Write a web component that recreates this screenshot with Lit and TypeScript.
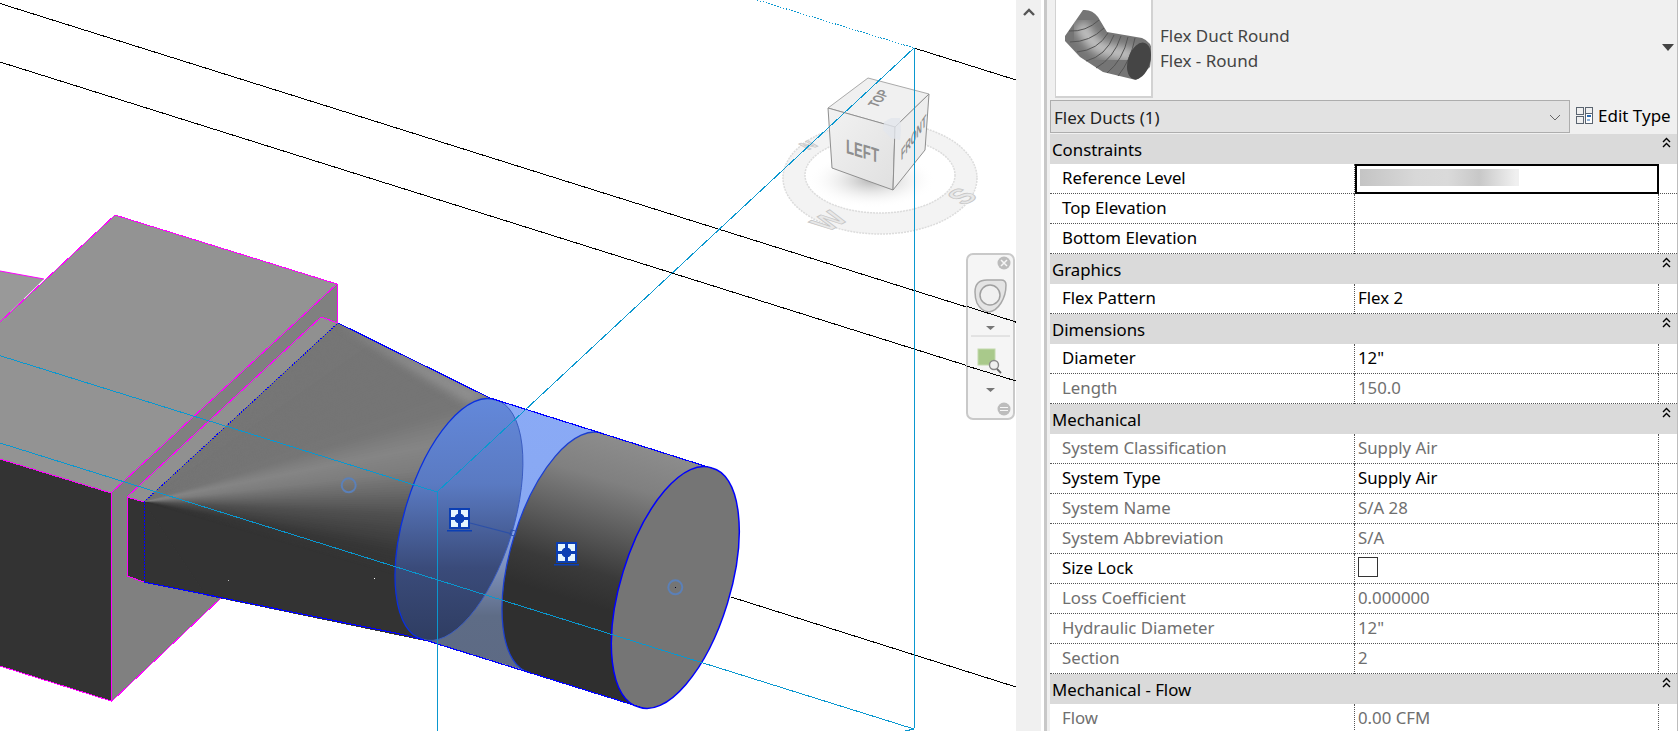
import { LitElement, html, css, svg } from 'lit'
import { customElement } from 'lit/decorators.js'

type Row =
  | { head: string }
  | { label: string; value?: string; off?: boolean; kind?: 'blur' | 'check' }

const ROWS: Row[] = [
  { head: 'Constraints' },
  { label: 'Reference Level', kind: 'blur' },
  { label: 'Top Elevation' },
  { label: 'Bottom Elevation' },
  { head: 'Graphics' },
  { label: 'Flex Pattern', value: 'Flex 2' },
  { head: 'Dimensions' },
  { label: 'Diameter', value: '12"' },
  { label: 'Length', value: '150.0', off: true },
  { head: 'Mechanical' },
  { label: 'System Classification', value: 'Supply Air', off: true },
  { label: 'System Type', value: 'Supply Air' },
  { label: 'System Name', value: 'S/A 28', off: true },
  { label: 'System Abbreviation', value: 'S/A', off: true },
  { label: 'Size Lock', kind: 'check' },
  { label: 'Loss Coefficient', value: '0.000000', off: true },
  { label: 'Hydraulic Diameter', value: '12"', off: true },
  { label: 'Section', value: '2', off: true },
  { head: 'Mechanical - Flow' },
  { label: 'Flow', value: '0.00 CFM', off: true },
]

// reducer shading, colour by slope of the ray out of the rectangle corner
const FAN: [number, number][] = [
  [-1, 0x76], [-0.4, 0x75], [-0.3, 0x76], [-0.2, 0x85], [-0.12, 0x7e],
  [-0.05, 0x6c], [0.05, 0x50], [0.2, 0x36], [0.3, 0x33],
]

function fanGrey(s: number) {
  for (let i = 1; i < FAN.length; i++) {
    if (s <= FAN[i][0]) {
      const [a, ca] = FAN[i - 1]
      const [b, cb] = FAN[i]
      const g = Math.round(ca + ((s - a) / (b - a)) * (cb - ca))
      return `rgb(${g},${g},${g})`
    }
  }
  return '#333'
}

// each wedge runs past the clip, so later ones paint over the seams
function fan() {
  const out = []
  const x = 540 - 144
  for (let s = -1; s < 0.3; s += 0.01) {
    out.push(svg`<polygon points="144,502 540,${502 + s * x} 540,${502 + 1.5 * x}" fill=${fanGrey(s + 0.005)}/>`)
  }
  return out
}

// tilted ellipses as arcs, so a userSpace gradient is not turned with them
const AX = 36.5
const AY = 119.5
const arcFull = (cx: number, cy: number) =>
  `M${cx + AX} ${cy - AY}A125 53 -73 1 0 ${cx - AX} ${cy + AY}A125 53 -73 1 0 ${cx + AX} ${cy - AY}z`
const arcLeft = (cx: number, cy: number) =>
  `M${cx + AX} ${cy - AY}A125 53 -73 1 0 ${cx - AX} ${cy + AY}`
const arcRight = (cx: number, cy: number) =>
  `M${cx - AX} ${cy + AY}A125 53 -73 1 0 ${cx + AX} ${cy - AY}`

const grip = (x: number, y: number) => svg`
  <g transform="translate(${x} ${y})">
    <rect width="21" height="21" fill="#0b3fb4"/>
    <rect x="2" y="2" width="17" height="17" fill="#e6f6ff"/>
    <path d="M9 2h3v4h1l2 2v1h4v3h-4v1l-2 2h-1v4H9v-4H8l-2-2v-1H2V9h4V8l2-2h1z" fill="#0b3fb4"/>
    <rect x="-2" y="22" width="25" height="1.5" fill="#0b3fb4"/>
  </g>`

@customElement('app-root')
export class AppRoot extends LitElement {
  static styles = css`
    :host {
      display: flex;
      width: 1678px;
      height: 731px;
      overflow: hidden;
      background: #fff;
      font-family: 'Noto Sans', 'Open Sans', sans-serif;
      font-size: 16.8px;
      color: #000;
    }
    .canvas {
      flex: 0 0 1016px;
      height: 731px;
    }
    svg {
      display: block;
    }
    .strip {
      flex: 0 0 25px;
      background: #f0f0f0;
      display: flex;
      justify-content: center;
      align-items: flex-start;
      padding-top: 8px;
      box-sizing: border-box;
    }
    .gap {
      flex: 0 0 3px;
      background: #fff;
    }
    .bar {
      flex: 0 0 3px;
      background: #c8c8c8;
    }
    .pad {
      flex: 0 0 3px;
      background: #f0f0f0;
    }
    .panel {
      flex: 0 0 628px;
      height: 731px;
      display: flex;
      flex-direction: column;
      border-right: 1px solid #bdbdbd;
      box-sizing: border-box;
      overflow: hidden;
    }
    .type {
      flex: 0 0 100px;
      min-height: 0;
      background: #f0f0f0;
      display: flex;
      align-items: stretch;
      padding: 0 0 2px 5px;
      box-sizing: border-box;
    }
    .thumb {
      flex: 0 0 98px;
      background: #fff;
      border: solid #d2d2d2;
      border-width: 0 2px 2px 1px;
      box-sizing: border-box;
    }
    .names {
      flex: 1;
      padding: 24px 0 0 7px;
      line-height: 24.5px;
      font-size: 17px;
      color: #444;
    }
    .caret {
      width: 12px;
      margin: 44px 3px 0 0;
    }
    .picker {
      flex: 0 0 34px;
      min-height: 0;
      display: flex;
      background: #f0f0f0;
    }
    .select {
      flex: 0 0 520px;
      box-sizing: border-box;
      height: 33px;
      background: #e2e2e2;
      border: 1px solid #adadad;
      border-width: 1px 1.5px 1.5px 1px;
      display: flex;
      align-items: center;
      justify-content: space-between;
      padding: 1px 8px 0 3px;
      color: #222;
      font-size: 17px;
    }
    .edit {
      flex: 1;
      display: flex;
      align-items: center;
      gap: 5px;
      padding: 0 0 4px 6px;
      font-size: 17px;
    }
    .row {
      display: grid;
      grid-template-columns: 304px 304px 1fr;
      flex: 0 0 30px;
      min-height: 0;
      background: #fff;
      line-height: 27px;
    }
    .row > div {
      box-sizing: border-box;
      border-bottom: 1px dotted #555;
      height: 30px;
      white-space: nowrap;
    }
    .lab {
      padding-left: 12px;
    }
    .val {
      border-left: 1px dotted #555;
      padding-left: 3px;
      position: relative;
    }
    .tail {
      border-left: 1px dotted #555;
    }
    .off {
      color: #6f6f6f;
    }
    .focus {
      position: absolute;
      left: 0;
      top: 0;
      width: 304px;
      height: 30px;
      box-sizing: border-box;
      border: 2px solid #000;
      background: #fff;
    }
    .smear {
      position: absolute;
      left: 3px;
      top: 3px;
      width: 159px;
      height: 17px;
      background: linear-gradient(90deg, #c4c4c4, #d8d8d8 35%, #dadada 55%, #c8c8c8 75%, #f0f0f0 98%);
    }
    .check {
      position: absolute;
      left: 3px;
      top: 3px;
      width: 20px;
      height: 20px;
      box-sizing: border-box;
      border: 1.5px solid #333;
    }
    .head {
      flex: 0 0 30px;
      min-height: 0;
      box-sizing: border-box;
      background: #dadada;
      display: flex;
      justify-content: space-between;
      padding: 0 6px 0 2px;
      line-height: 32px;
    }
    .head svg {
      margin-top: 3px;
    }
  `

  private row(r: Row) {
    if ('head' in r) {
      return html`<div class="head"><span>${r.head}</span>
        <svg width="9" height="12" viewBox="0 0 9 12"><path d="M1 5l3.5-3.5L8 5M1 10l3.5-3.5L8 10" fill="none" stroke="#000" stroke-width="1.4"/></svg>
      </div>`
    }
    return html`<div class="row">
      <div class="lab ${r.off ? 'off' : ''}">${r.label}</div>
      <div class="val ${r.off ? 'off' : ''}">
        ${r.value ?? ''}
        ${r.kind === 'blur' ? html`<div class="focus"><div class="smear"></div></div>` : ''}
        ${r.kind === 'check' ? html`<div class="check"></div>` : ''}
      </div>
      <div class="tail"></div>
    </div>`
  }

  private scene() {
    return html`<svg width="1016" height="731" viewBox="0 0 1016 731">
      <defs>
        <linearGradient id="cyl" gradientUnits="userSpaceOnUse" x1="620" y1="440" x2="572" y2="600">
          <stop offset="0" stop-color="#8c8c8c"/><stop offset=".25" stop-color="#808080"/>
          <stop offset=".55" stop-color="#5a5a5a"/><stop offset=".8" stop-color="#3a3a3a"/>
          <stop offset="1" stop-color="#2f2f2f"/>
        </linearGradient>
        <linearGradient id="band" gradientUnits="userSpaceOnUse" x1="0" y1="400" x2="0" y2="670">
          <stop offset="0" stop-color="#8aaaf6"/><stop offset=".45" stop-color="#88a8f2"/>
          <stop offset=".62" stop-color="#7d90bb"/><stop offset=".8" stop-color="#5e6c86"/>
          <stop offset="1" stop-color="#5d6a84"/>
        </linearGradient>
        <linearGradient id="cap" gradientUnits="userSpaceOnUse" x1="0" y1="400" x2="0" y2="640">
          <stop offset="0" stop-color="#6388da"/><stop offset=".35" stop-color="#5a7ac2"/>
          <stop offset=".7" stop-color="#3a4b7a"/><stop offset="1" stop-color="#2f3d62"/>
        </linearGradient>
        <linearGradient id="face" x1="0" y1="0" x2="1" y2="1">
          <stop offset="0" stop-color="#f2f2f2"/><stop offset="1" stop-color="#e0e0e0"/>
        </linearGradient>
        <radialGradient id="shade">
          <stop offset="0" stop-color="#b4b4b4"/><stop offset="1" stop-color="#fff" stop-opacity="0"/>
        </radialGradient>
        <clipPath id="red"><polygon points="144,502 338,323 490,398 530,520 428,641 144,582"/></clipPath>
        <filter id="soft"><feGaussianBlur stdDeviation="5"/></filter>
      </defs>

      <!-- back duct and main box -->
      <polygon points="0,271 44,279 0,322" fill="#999"/>
      <path d="M0 271L44 279" stroke="#f0f" fill="none"/>
      <polygon points="115,215 337,284 111,493 0,459 0,322" fill="#939393"/>
      <polygon points="0,459 111,493 111,701 0,666" fill="#333"/>
      <polygon points="111,493 337,284 337,323 321,317 127,497 127,576 144,582 221,598 112,701" fill="#808080"/>
      <polygon points="321,317 338,323 144,502 127,497" fill="#909090"/>
      <polygon points="127,497 144,502 144,582 127,576" fill="#333"/>
      <g fill="none" stroke="#f0f" shape-rendering="crispEdges">
        <path d="M0 322L115 215L337 284L111 493L0 459M111 493V701L0 666M337 284V323M321 317L127 497V576L144 582M321 317L338 323M127 497L144 502M112 701L221 598"/>
      </g>

      <!-- reducer -->
      <polygon points="144,502 338,323 490,398 530,520 428,641 144,582" fill="#333"/>
      <g clip-path="url(#red)">
        ${fan()}
        <polygon points="338,323 490,395 470,405 420,375" fill="#9a9a9a" opacity=".7" filter="url(#soft)"/>
      </g>

      <!-- section band and flex run -->
      <polygon points="490,398 597,432 523,670 428,641" fill="url(#band)"/>
      <path d=${arcFull(566, 553)} fill="url(#cyl)"/>
      <polygon points="602.5,433.5 711.8,468 638.8,707 529.5,672.5" fill="url(#cyl)"/>
      <path d=${arcLeft(566, 553)} fill="none" stroke="#1b3fd0" stroke-width="1.3"/>
      <path d=${arcFull(459, 519.5)} fill="url(#cap)"/>
      <path d=${arcLeft(459, 519.5)} fill="none" stroke="#0a30e0" stroke-width="1.3"/>
      <path d=${arcRight(459, 519.5)} fill="none" stroke="#3a5cc0"/>
      <path d=${arcFull(675.3, 587.5)} fill="#757575" stroke="#00f" stroke-width="1.5"/>
      <g fill="none" stroke="#00f" stroke-width="1.2" shape-rendering="crispEdges">
        <path d="M338 323L490 398L708 467M144 582L400 634L428 641L643 708"/>
      </g>
      <path d="M144 502L338 323M144 502V582" fill="none" stroke="#00f" stroke-dasharray="1.5 1.5" shape-rendering="crispEdges"/>

      <circle cx="348.7" cy="485.3" r="7" fill="none" stroke="#5b80b8" stroke-width="2"/>
      <circle cx="675.3" cy="587.3" r="7" fill="none" stroke="#5b80b8" stroke-width="2"/>
      <rect x="675" y="587" width="1" height="1" fill="#002"/>
      <rect x="374" y="578" width="1" height="1" fill="#fff"/>
      <rect x="228" y="580" width="1" height="1" fill="#bbb"/>

      <!-- black reference lines -->
      <g fill="none" stroke="#000" shape-rendering="crispEdges">
        <path d="M0 3.5L1016 322.5M0 62L1016 381M914 48L1016 80M731 597L1016 687"/>
      </g>

      <!-- view cube -->
      <ellipse cx="880" cy="178" rx="97" ry="56" fill="#f3f3f3" stroke="#dcdcdc" stroke-width="1.5" stroke-dasharray="2 1"/>
      <ellipse cx="880" cy="175" rx="75" ry="38" fill="#fff" stroke="#dcdcdc" stroke-width="1.5" stroke-dasharray="2 1"/>
      <ellipse cx="872" cy="180" rx="64" ry="28" fill="url(#shade)"/>
      <polygon points="868,78 929,94 895,127 828,108" fill="#f0f0f0" stroke="#aaa"/>
      <polygon points="828,108 895,127 893,190 832,168" fill="url(#face)" stroke="#8f8f8f"/>
      <polygon points="895,127 929,94 925,150 893,190" fill="#ededed" stroke="#8f8f8f"/>
      <polygon points="891,118 900,118 901,130 900,140 891,138 883,130 884,122" fill="#e2e6ec" opacity=".8"/>
      <g font-family="'Liberation Sans', sans-serif" font-weight="700" fill="#8e8e8e">
        <text transform="matrix(.66,.2,0,1,846,153)" font-size="20">LEFT</text>
        <text transform="matrix(.46,-.66,0,1,901,161)" font-size="16">FRONT</text>
        <text transform="matrix(.45,-.55,1,.35,877,108)" font-size="14">TOP</text>
      </g>
      <g font-family="'Liberation Sans', sans-serif" font-weight="700" fill="#e8e8e8" stroke="#c4c4c4" stroke-width=".8">
        <text transform="matrix(1,-.38,1,.55,808,150)" font-size="15">N</text>
        <text transform="matrix(.95,-.55,1.2,.6,828,232)" font-size="24">W</text>
        <text transform="matrix(.9,-.55,1.1,.6,964,206)" font-size="25">S</text>
      </g>

      <!-- nav bar -->
      <rect x="967" y="254" width="47" height="165" rx="6" fill="#f5f5f5" stroke="#c9c9c9" stroke-width="2"/>
      <circle cx="1004" cy="263" r="6.5" fill="#bcbcbc"/>
      <path d="M1001 260l6 6m0-6l-6 6" stroke="#f5f5f5" stroke-width="1.5"/>
      <path d="M975 292q0-12 12-12h14q5 0 5 5q0 10-5 18q-5 8-12 9q-8-1-12-9q-2-5-2-11z" fill="#e4e4e4" stroke="#a8a8a8" stroke-width="1.5"/>
      <circle cx="990" cy="295" r="10" fill="#f0f0f0" stroke="#a0a0a0" stroke-width="1.5"/>
      <path d="M986 326h9l-4.5 4z" fill="#777"/>
      <path d="M971 336h39" stroke="#d0d0d0"/>
      <rect x="978" y="349" width="17" height="16" fill="#a9c98b" stroke="#c3d9ae"/>
      <circle cx="994" cy="365" r="4.5" fill="#f0f0f0" stroke="#888" stroke-width="1.4"/>
      <path d="M997 369l4 4" stroke="#666" stroke-width="1.8"/>
      <path d="M986 388h9l-4.5 4z" fill="#777"/>
      <circle cx="1004" cy="409" r="6.5" fill="#bcbcbc"/>
      <path d="M1000 407.5h8m-8 3h8" stroke="#f5f5f5" stroke-width="1.2"/>
      <path d="M967 306.5L1016 322M967 366L1016 381" fill="none" stroke="#000" shape-rendering="crispEdges"/>

      <!-- section box, drawn over everything -->
      <g fill="none" stroke="#0a97cf" shape-rendering="crispEdges">
        <path d="M914 48L437 492V731M437 492L0 355.7M0 443L914 729L905 731M914 48V728"/>
        <path d="M757 0L914 48" stroke-dasharray="1.5 1.5"/>
      </g>

      <path d="M470 523L512 534" stroke="#2c50a8" stroke-width="1.2"/>
      <rect x="510.5" y="530.5" width="5" height="5" fill="none" stroke="#2c50a8" transform="rotate(15 513 533)"/>
      ${grip(449, 508)}
      ${grip(556, 542)}
    </svg>`
  }

  render() {
    return html`
      <div class="canvas">${this.scene()}</div>
      <div class="strip">
        <svg width="12" height="8" viewBox="0 0 12 8"><path d="M1 7l5-5 5 5" fill="none" stroke="#555" stroke-width="2.4"/></svg>
      </div>
      <div class="gap"></div>
      <div class="bar"></div>
      <div class="pad"></div>
      <div class="panel">
        <div class="type">
          <div class="thumb">
            <svg width="95" height="96" viewBox="0 0 95 96">
              <defs>
                <filter id="fuzz"><feGaussianBlur stdDeviation=".5"/></filter>
                <filter id="glow"><feGaussianBlur stdDeviation="4"/></filter>
              </defs>
              <g filter="url(#fuzz)">
                <path d="M9 36L27 10Q36 9 42 17L51 32L86 38Q96 42 96 52L94 67L80 80L47 72L24 57L9 41z" fill="#757575"/>
                <path d="M24 24Q36 46 50 50L78 56" fill="none" stroke="#c0c0c0" stroke-width="14" filter="url(#glow)"/>
                <g fill="none" stroke="#555" stroke-width="1">
                  <path d="M13 31Q30 32 43 20"/>
                  <path d="M14 42Q34 42 48 28"/>
                  <path d="M21 52Q42 50 52 33"/>
                  <path d="M30 61Q50 56 58 35"/>
                  <path d="M40 68Q58 58 65 36"/>
                  <path d="M51 73Q67 60 72 37"/>
                  <path d="M62 76Q75 60 79 38"/>
                </g>
                <ellipse cx="83" cy="61" rx="11" ry="19" transform="rotate(18 83 61)" fill="#454545"/>
              </g>
            </svg>
          </div>
          <div class="names">Flex Duct Round<br />Flex - Round</div>
          <svg class="caret" width="12" height="8" viewBox="0 0 12 8"><path d="M0 0h12l-6 7z" fill="#444"/></svg>
        </div>
        <div class="picker">
          <div class="select">
            <span>Flex Ducts (1)</span>
            <svg width="12" height="7" viewBox="0 0 12 7"><path d="M1 1l5 5 5-5" fill="none" stroke="#666"/></svg>
          </div>
          <div class="edit">
            <svg width="17" height="17" viewBox="0 0 17 17" fill="none" stroke="#5a6470">
              <rect x=".5" y=".5" width="7" height="7"/>
              <rect x=".5" y="9.5" width="7" height="7"/>
              <rect x="9.5" y=".5" width="7" height="7"/>
              <rect x="9.5" y="6.5" width="7" height="10" fill="#fff"/>
              <path d="M11 9h4" stroke="#2a6ab0" stroke-width="2"/>
              <path d="M11 13h3" stroke="#2a6ab0"/>
            </svg>
            <span>Edit Type</span>
          </div>
        </div>
        ${ROWS.map((r) => this.row(r))}
      </div>
    `
  }
}
